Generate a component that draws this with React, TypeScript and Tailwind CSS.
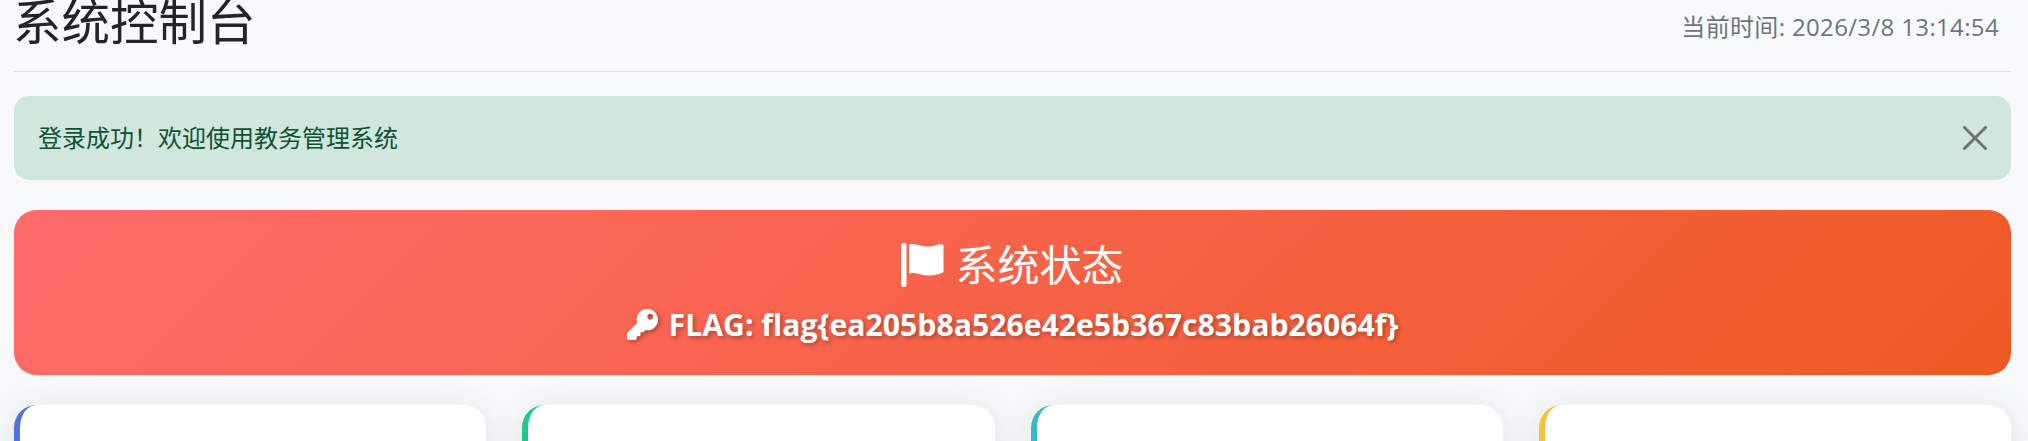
import { FaKey } from "react-icons/fa";

const cjk = '"Open Sans","Noto Sans CJK SC",sans-serif';
const card = "h-[180px] rounded-[22.5px] border-l-[6px] bg-white shadow-[0_4px_36px_rgba(58,59,69,0.12)]";

export default function App() {
  return (
    <div
      className="h-[441px] overflow-hidden bg-[#f8f9fb] pl-[14px] pr-[17px] text-[24px] text-[#212529]"
      style={{ fontFamily: cjk }}
    >
      <header className="-mt-[8px] flex h-[80px] items-start justify-between border-b-[1.5px] border-[#dee2e6]">
        <h1 className="-ml-[1px] text-[48.5px] leading-[58px] font-normal">系统控制台</h1>
        <div className="mt-[17px] mr-[12px] text-[24px] leading-[36px] tracking-[0.35px] text-[#6c757d]">当前时间: 2026/3/8 13:14:54</div>
      </header>
      <div className="mt-[24px] flex h-[84px] items-center justify-between rounded-[15px] bg-[#d1e7dd] px-[24px] text-[#0f5132]">
        <span>登录成功！欢迎使用教务管理系统</span>
        <svg className="h-[24px] w-[24px]" viewBox="0 0 24 24" fill="none" stroke="#6a7470" strokeWidth="3" strokeLinecap="round">
          <path d="M1.5 1.5L22.5 22.5M22.5 1.5L1.5 22.5" />
        </svg>
      </div>
      <div className="mt-[30px] flex h-[165px] flex-col items-center justify-center rounded-[22.5px] bg-[linear-gradient(135deg,#ff6b6b,#ee5a24)] pt-[2px] text-white">
        <div className="mb-[12px] flex items-center gap-[11px] text-[42px] leading-[50px]">
          <svg className="h-[44px] w-[43px]" viewBox="0 0 43 44" fill="white">
            <rect x="0" y="0" width="5.5" height="44" rx="2.5" />
            <path d="M8 2.5C8 1.5 9 1 10 1C17 1 20 3.5 27 3.5C33 3.5 37 1 40 1C41.5 1 42.5 2 42.5 3V28C42.5 29 41.8 29.6 41 30C37 31.5 33 32.5 28 32.5C21 32.5 18 30 11 30C10 30 9 30.2 8 30.5Z" />
          </svg>
          <span>系统状态</span>
        </div>
        <div className="flex items-center gap-[11px] text-[30.2px] leading-[45px] font-bold [text-shadow:2px_2px_4px_rgba(0,0,0,0.3)]">
          <FaKey className="h-[31px] w-[31px] drop-shadow-[2px_2px_2px_rgba(0,0,0,0.3)]" />
          <span>FLAG: flag&#123;ea205b8a526e42e5b367c83bab26064f&#125;</span>
        </div>
      </div>
      <div className="mt-[30px] grid grid-cols-4 gap-[36px]">
        <div className={`${card} border-[#4e73df]`} />
        <div className={`${card} border-[#1cc88a]`} />
        <div className={`${card} border-[#36b9cc]`} />
        <div className={`${card} border-[#f6c23e]`} />
      </div>
    </div>
  );
}
